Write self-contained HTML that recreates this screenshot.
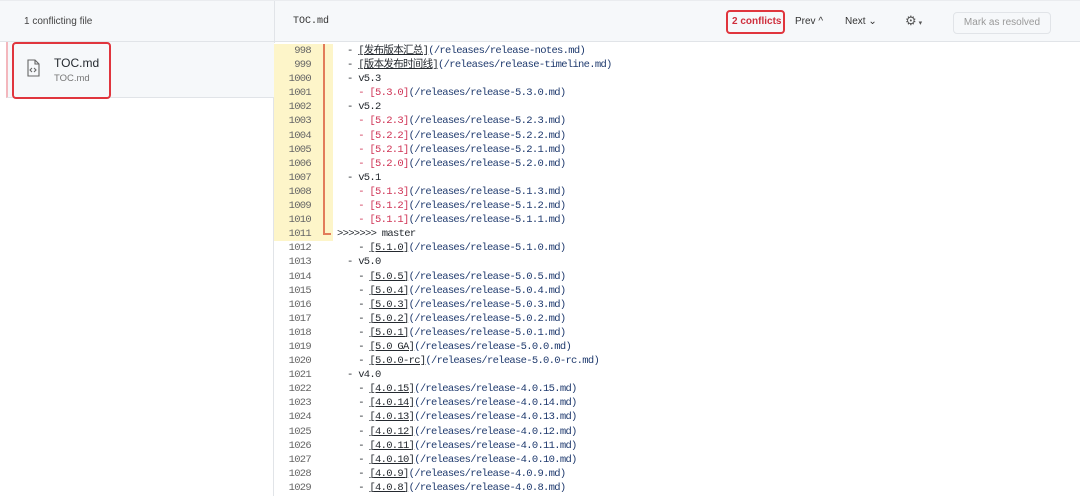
<!DOCTYPE html>
<html><head><meta charset="utf-8"><style>
*{margin:0;padding:0;box-sizing:border-box}
body{width:1080px;height:496px;overflow:hidden;background:#fff;font-family:"Liberation Sans","Noto Sans CJK SC",sans-serif;position:relative}
.hdr{position:absolute;top:0;left:0;width:1080px;height:42px;background:#f6f8fa;border-bottom:1px solid #e1e4e8;border-top:1px solid #eaecef}
.side{position:absolute;top:42px;left:0;width:274px;height:454px;border-right:1px solid #e1e4e8}
.item{position:absolute;top:0;left:6px;width:268px;height:56px;background:#f6f8fa;border-left:2px solid #f3b7bd;border-bottom:1px solid #e1e4e8}
.box{position:absolute;border:2.5px solid #e0353d;border-radius:4px;z-index:3}
.code{position:absolute;top:44px;left:274px;width:806px;font-family:"Liberation Mono","Noto Sans CJK SC",monospace;font-size:10.5px;letter-spacing:-0.7px;line-height:14.1px}
.r{height:14.1px;position:relative;white-space:pre;color:#24292f}
.n{position:absolute;left:0;width:37px;text-align:right;color:#666}
.c{background:linear-gradient(to right,#fdf5c9 0,#fdf5c9 59px,transparent 59px)}
.t{position:absolute;left:73px}
.p{color:#1f3a6e}
.u{text-decoration:underline;color:#24292f}
.rd{color:#cf3355}
.vl{position:absolute;left:323px;top:44px;width:1.5px;height:190px;background:#e27c5a;z-index:2}
.hl{position:absolute;left:323px;top:233px;width:8px;height:1.5px;background:#e27c5a;z-index:2}
</style></head><body>
<div class="hdr">
<div style="position:absolute;left:24px;top:15px;font-size:10px;color:#444">1 conflicting file</div>
<div style="position:absolute;left:274px;top:0;height:42px;border-left:1px solid #e1e4e8"></div>
<div style="position:absolute;left:293px;top:15px;font-size:10px;font-family:'Liberation Mono',monospace;color:#333">TOC.md</div>
<div style="position:absolute;left:732px;top:15px;font-size:10px;font-weight:bold;color:#cf2e3c">2 conflicts</div>
<div class="box" style="left:726px;top:9px;width:59px;height:24px"></div>
<div style="position:absolute;left:795px;top:15px;font-size:10px;color:#333">Prev ^</div>
<div style="position:absolute;left:845px;top:15px;font-size:10px;color:#333">Next ⌄</div>
<div style="position:absolute;left:905px;top:12px;font-size:13px;color:#555">⚙<span style="font-size:7px"> ▾</span></div>
<div style="position:absolute;left:953px;top:11px;width:98px;height:22px;border:1px solid #e1e4e8;border-radius:4px;background:#f6f8fa;font-size:10px;color:#999;text-align:center;line-height:20px">Mark as resolved</div>
</div>
<div class="side"><div class="item">
<svg style="position:absolute;left:17px;top:17px" width="16" height="19" viewBox="0 0 16 19" fill="none" stroke="#666" stroke-width="1.1"><path d="M3 1h7l4 4v12H3z M10 1v4h4"/><path d="M7 9l-2 2 2 2 M9 9l2 2-2 2"/></svg>
<div style="position:absolute;left:46px;top:14px;font-size:12px;color:#24292f">TOC.md</div>
<div style="position:absolute;left:46px;top:31px;font-size:9.5px;color:#777">TOC.md</div>
</div></div>
<div class="box" style="left:12px;top:42px;width:99px;height:57px"></div>
<div class="vl"></div><div class="hl"></div>
<div class="code">
<div class="r c"><span class="n">998</span><span class="t">- <span class="u">[发布版本汇总]</span><span class="p">(/releases/release-notes.md)</span></span></div>
<div class="r c"><span class="n">999</span><span class="t">- <span class="u">[版本发布时间线]</span><span class="p">(/releases/release-timeline.md)</span></span></div>
<div class="r c"><span class="n">1000</span><span class="t">- v5.3</span></div>
<div class="r c"><span class="n">1001</span><span class="t">  <span class="rd">- [5.3.0]</span><span class="p">(/releases/release-5.3.0.md)</span></span></div>
<div class="r c"><span class="n">1002</span><span class="t">- v5.2</span></div>
<div class="r c"><span class="n">1003</span><span class="t">  <span class="rd">- [5.2.3]</span><span class="p">(/releases/release-5.2.3.md)</span></span></div>
<div class="r c"><span class="n">1004</span><span class="t">  <span class="rd">- [5.2.2]</span><span class="p">(/releases/release-5.2.2.md)</span></span></div>
<div class="r c"><span class="n">1005</span><span class="t">  <span class="rd">- [5.2.1]</span><span class="p">(/releases/release-5.2.1.md)</span></span></div>
<div class="r c"><span class="n">1006</span><span class="t">  <span class="rd">- [5.2.0]</span><span class="p">(/releases/release-5.2.0.md)</span></span></div>
<div class="r c"><span class="n">1007</span><span class="t">- v5.1</span></div>
<div class="r c"><span class="n">1008</span><span class="t">  <span class="rd">- [5.1.3]</span><span class="p">(/releases/release-5.1.3.md)</span></span></div>
<div class="r c"><span class="n">1009</span><span class="t">  <span class="rd">- [5.1.2]</span><span class="p">(/releases/release-5.1.2.md)</span></span></div>
<div class="r c"><span class="n">1010</span><span class="t">  <span class="rd">- [5.1.1]</span><span class="p">(/releases/release-5.1.1.md)</span></span></div>
<div class="r c"><span class="n">1011</span><span class="t" style="left:63px">&gt;&gt;&gt;&gt;&gt;&gt;&gt; master</span></div>
<div class="r"><span class="n">1012</span><span class="t">  - <span class="u">[5.1.0]</span><span class="p">(/releases/release-5.1.0.md)</span></span></div>
<div class="r"><span class="n">1013</span><span class="t">- v5.0</span></div>
<div class="r"><span class="n">1014</span><span class="t">  - <span class="u">[5.0.5]</span><span class="p">(/releases/release-5.0.5.md)</span></span></div>
<div class="r"><span class="n">1015</span><span class="t">  - <span class="u">[5.0.4]</span><span class="p">(/releases/release-5.0.4.md)</span></span></div>
<div class="r"><span class="n">1016</span><span class="t">  - <span class="u">[5.0.3]</span><span class="p">(/releases/release-5.0.3.md)</span></span></div>
<div class="r"><span class="n">1017</span><span class="t">  - <span class="u">[5.0.2]</span><span class="p">(/releases/release-5.0.2.md)</span></span></div>
<div class="r"><span class="n">1018</span><span class="t">  - <span class="u">[5.0.1]</span><span class="p">(/releases/release-5.0.1.md)</span></span></div>
<div class="r"><span class="n">1019</span><span class="t">  - <span class="u">[5.0 GA]</span><span class="p">(/releases/release-5.0.0.md)</span></span></div>
<div class="r"><span class="n">1020</span><span class="t">  - <span class="u">[5.0.0-rc]</span><span class="p">(/releases/release-5.0.0-rc.md)</span></span></div>
<div class="r"><span class="n">1021</span><span class="t">- v4.0</span></div>
<div class="r"><span class="n">1022</span><span class="t">  - <span class="u">[4.0.15]</span><span class="p">(/releases/release-4.0.15.md)</span></span></div>
<div class="r"><span class="n">1023</span><span class="t">  - <span class="u">[4.0.14]</span><span class="p">(/releases/release-4.0.14.md)</span></span></div>
<div class="r"><span class="n">1024</span><span class="t">  - <span class="u">[4.0.13]</span><span class="p">(/releases/release-4.0.13.md)</span></span></div>
<div class="r"><span class="n">1025</span><span class="t">  - <span class="u">[4.0.12]</span><span class="p">(/releases/release-4.0.12.md)</span></span></div>
<div class="r"><span class="n">1026</span><span class="t">  - <span class="u">[4.0.11]</span><span class="p">(/releases/release-4.0.11.md)</span></span></div>
<div class="r"><span class="n">1027</span><span class="t">  - <span class="u">[4.0.10]</span><span class="p">(/releases/release-4.0.10.md)</span></span></div>
<div class="r"><span class="n">1028</span><span class="t">  - <span class="u">[4.0.9]</span><span class="p">(/releases/release-4.0.9.md)</span></span></div>
<div class="r"><span class="n">1029</span><span class="t">  - <span class="u">[4.0.8]</span><span class="p">(/releases/release-4.0.8.md)</span></span></div>
</div>
</body></html>
